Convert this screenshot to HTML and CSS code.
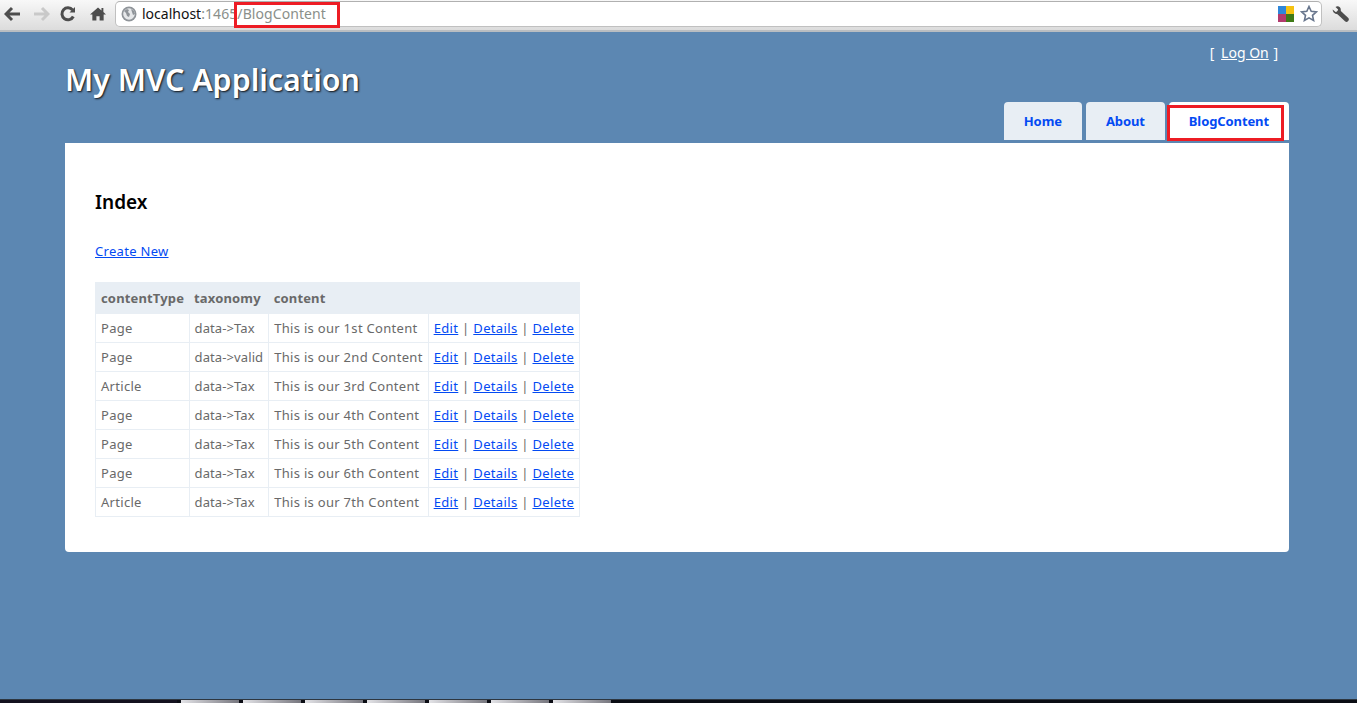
FILE: index.html
```html
<!DOCTYPE html>
<html lang="en">

<head>
    <meta charset="UTF-8" />
    <title>Index</title>
    <link rel="stylesheet" href="styles.css">
</head>

<body>
    <div class="toolbar">
        <div class="nav-icons">
            <svg width="18" height="16" viewBox="0 0 18 16"><path d="M8 2 2 8l6 6M2.500 8H16" fill="none" stroke="#4d4d4d" stroke-width="3"/></svg>
            <svg width="18" height="16" viewBox="0 0 18 16"><path d="M10 2l6 6-6 6M15.500 8H2" fill="none" stroke="#c9c9c9" stroke-width="3"/></svg>
            <svg width="16" height="16" viewBox="0 0 16 16"><path d="M13.300 10.500A6 6 0 1 1 12.600 4" fill="none" stroke="#4d4d4d" stroke-width="3"/><path d="M9.500 6.500H15V1z" fill="#4d4d4d"/></svg>
            <svg class="home" width="16" height="16" viewBox="0 0 17 16"><path d="M8.500 1 0 8.500h2.500V15h4.300v-4.500h3.400V15h4.300V8.500H17l-2.800-2.500V1.500h-2v2.700z" fill="#4d4d4d"/></svg>
        </div>
        <div class="omnibox">
            <svg class="globe" width="16" height="16" viewBox="0 0 16 16"><circle cx="8" cy="8" r="7.500" fill="#8f9499"/><circle cx="8" cy="8" r="5.800" fill="#e6e8ea"/><path d="M3 5l3-2 2 1-1 2 2 2-1 3-2-1-1-3zM10 3l3 2 1 3-2 1-1-3z" fill="#8f9499"/></svg>
            <span class="host">localhost</span><span class="url-rest">:1465/BlogContent</span>
            <div class="spacer"></div>
            <div class="ext-icon"><i class="blue"></i><i class="yellow"></i><i class="pink"></i><i class="green"></i></div>
            <svg width="18" height="17" viewBox="0 0 18 17"><path d="M9 1.500l2.200 4.800 5.200.6-3.900 3.500 1.100 5.100L9 12.900l-4.600 2.600 1.100-5.100L1.600 6.900l5.200-.6z" fill="#fff" stroke="#67758c" stroke-width="1.600"/></svg>
            <div class="red-box url-mark"></div>
        </div>
        <svg class="wrench" width="17" height="16" viewBox="0 0 17 16"><path d="M7 6.500 14.500 13.500" stroke="#4d4d4d" stroke-width="4.500" stroke-linecap="round"/><path d="M.7 3.600 3.600 6l2-.6.500-2L3.500 1C6-.6 9 1 8.800 4.200 8.700 7 6 8.600 3.500 7.800 1.800 7.200.6 5.500.7 3.600z" fill="#4d4d4d"/></svg>
    </div>

    <div class="page">
        <div class="header">
            <h1>My MVC Application</h1>
            <div class="header-right">
                <div class="login">[ <a href="#">Log On</a> ]</div>
                <ul class="menu">
                    <li><a href="#">Home</a></li>
                    <li><a href="#">About</a></li>
                    <li class="selected"><a href="#">BlogContent</a><div class="red-box tab-mark"></div></li>
                </ul>
            </div>
        </div>

        <div class="main">
            <h2>Index</h2>
            <p class="create"><a href="#">Create New</a></p>
            <table>
                <tr>
                    <th>contentType</th>
                    <th>taxonomy</th>
                    <th>content</th>
                    <th></th>
                </tr>
                <tr>
                    <td>Page</td>
                    <td>data-&gt;Tax</td>
                    <td>This is our 1st Content</td>
                    <td><a href="#">Edit</a> | <a href="#">Details</a> | <a href="#">Delete</a></td>
                </tr>
                <tr>
                    <td>Page</td>
                    <td>data-&gt;valid</td>
                    <td>This is our 2nd Content</td>
                    <td><a href="#">Edit</a> | <a href="#">Details</a> | <a href="#">Delete</a></td>
                </tr>
                <tr>
                    <td>Article</td>
                    <td>data-&gt;Tax</td>
                    <td>This is our 3rd Content</td>
                    <td><a href="#">Edit</a> | <a href="#">Details</a> | <a href="#">Delete</a></td>
                </tr>
                <tr>
                    <td>Page</td>
                    <td>data-&gt;Tax</td>
                    <td>This is our 4th Content</td>
                    <td><a href="#">Edit</a> | <a href="#">Details</a> | <a href="#">Delete</a></td>
                </tr>
                <tr>
                    <td>Page</td>
                    <td>data-&gt;Tax</td>
                    <td>This is our 5th Content</td>
                    <td><a href="#">Edit</a> | <a href="#">Details</a> | <a href="#">Delete</a></td>
                </tr>
                <tr>
                    <td>Page</td>
                    <td>data-&gt;Tax</td>
                    <td>This is our 6th Content</td>
                    <td><a href="#">Edit</a> | <a href="#">Details</a> | <a href="#">Delete</a></td>
                </tr>
                <tr>
                    <td>Article</td>
                    <td>data-&gt;Tax</td>
                    <td>This is our 7th Content</td>
                    <td><a href="#">Edit</a> | <a href="#">Details</a> | <a href="#">Delete</a></td>
                </tr>
            </table>
        </div>
    </div>

    <div class="taskbar">
        <div class="task-start"></div>
        <div class="task-btn"></div>
        <div class="task-btn"></div>
        <div class="task-btn"></div>
        <div class="task-btn"></div>
        <div class="task-btn"></div>
        <div class="task-btn"></div>
        <div class="task-btn"></div>
    </div>
</body>

</html>
```

FILE: styles.css
```css
*,
*::before,
*::after {
    box-sizing: border-box;
    margin: 0;
    padding: 0;
}

html,
body {
    height: 100%;
    overflow: hidden;
}

body {
    display: flex;
    flex-direction: column;
    background: #5c87b2;
    font-family: "Noto Sans", "Open Sans", sans-serif;
    font-size: 13px;
    color: #696969;
}

.toolbar {
    display: flex;
    align-items: center;
    height: 32px;
    flex-shrink: 0;
    padding: 0 8px 3px 4px;
    background: linear-gradient(#f8f8f8, #dcdcdc);
    border-bottom: 2px solid #b9bdc1;
}

.nav-icons {
    display: flex;
    align-items: center;
    gap: 10px;
    width: 111px;
}

.home {
    margin-left: 4px;
}

.omnibox {
    position: relative;
    display: flex;
    align-items: center;
    flex: 1;
    height: 26px;
    padding: 0 3px 0 5px;
    background: #fff;
    border: 1px solid #c0c0c0;
    border-top-color: #b0b0b0;
    border-radius: 5px;
    font-size: 14px;
}

.globe {
    margin-right: 5px;
}

.host {
    color: #111;
}

.url-rest {
    letter-spacing: 0.08px;
    color: #8a8f8a;
}

.spacer {
    flex: 1;
}

.ext-icon {
    display: grid;
    grid-template-columns: 8px 8px;
    grid-template-rows: 8px 8px;
    margin-right: 6px;
}

.ext-icon .blue { background: #2e86d9; }
.ext-icon .yellow { background: #f5c211; }
.ext-icon .pink { background: #b23a6e; }
.ext-icon .green { background: #3f7a16; }

.wrench {
    margin-left: 10px;
}

.red-box {
    position: absolute;
    border: 3px solid #ed1c24;
}

.url-mark {
    left: 118px;
    top: 0;
    width: 106px;
    height: 26px;
}

.page {
    flex: 1;
    width: 1224px;
    margin-left: 65px;
}

.header {
    display: flex;
    justify-content: space-between;
    height: 111px;
}

h1 {
    margin-top: 28px;
    font-size: 30.400px;
    font-weight: 600;
    line-height: 40px;
    color: #fff;
    text-shadow: 1px 1px 2px #111;
}

.login {
    margin: 12px 11px 0 0;
    line-height: 18px;
    font-size: 14px;
    color: #fff;
    text-align: right;
}

.login a {
    margin: 0 1px 0 3px;
    color: #fff;
}

.menu {
    display: flex;
    justify-content: flex-end;
    gap: 4px;
    margin-top: 40px;
    list-style: none;
}

.menu li {
    position: relative;
    height: 38px;
    background: #e8eef4;
    border-radius: 4px 4px 0 0;
}

.menu li a {
    display: block;
    padding: 0 20px;
    line-height: 38px;
    font-weight: 700;
    letter-spacing: -0.1px;
    color: #034af3;
    text-decoration: none;
}

.menu .selected {
    background: #fff;
}

.tab-mark {
    left: -2px;
    top: 3px;
    width: 117px;
    height: 36px;
}

.main {
    height: 409px;
    padding: 49px 30px 0;
    background: #fff;
    border-radius: 0 0 4px 4px;
}

h2 {
    font-size: 19px;
    font-weight: 600;
    line-height: 21px;
    color: #000;
}

.create {
    margin: 29px 0 22px;
    line-height: 18px;
    letter-spacing: 0.3px;
}

a {
    color: #034af3;
}

table {
    border-collapse: collapse;
    border: 1px solid #e8eef4;
}

th {
    height: 31px;
    padding: 0 5px;
    background: #e8eef4;
    text-align: left;
    letter-spacing: 0.15px;
}

td {
    height: 29px;
    padding: 0 5px;
    border: 1px solid #e8eef4;
    white-space: nowrap;
    letter-spacing: 0.3px;
}

td:nth-child(2) {
    letter-spacing: 0.1px;
}

td:last-child {
    letter-spacing: 0.35px;
}

.taskbar {
    display: flex;
    gap: 4px;
    height: 4px;
    flex-shrink: 0;
    background: #0b0d14;
    border-top: 1px solid #2d3640;
}

.task-start {
    width: 177px;
    background: #14121f;
}

.task-btn {
    width: 58px;
    background: linear-gradient(90deg, #e2e2e6, #77777f);
}
```
